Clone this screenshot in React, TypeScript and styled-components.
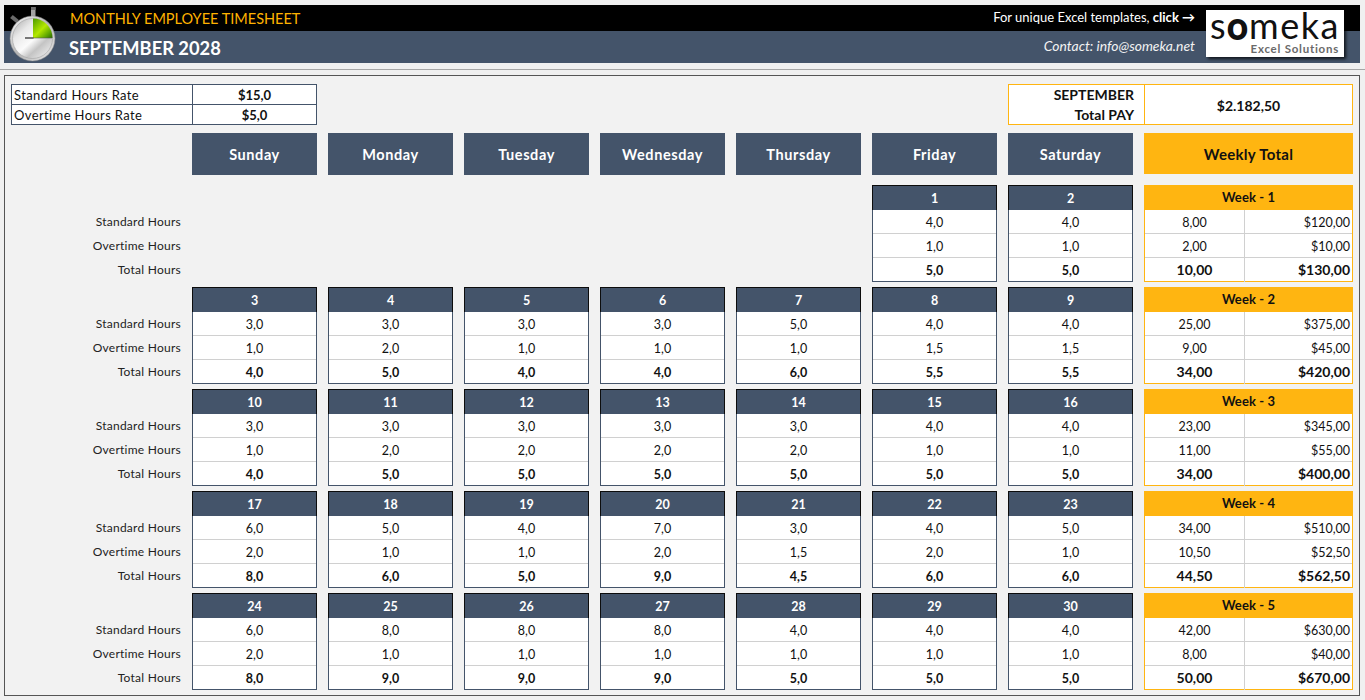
import React from "react";
import styled, { createGlobalStyle } from "styled-components";

const SLATE = "#44546a";
const AMBER = "#ffb511";
const INK = "#111111";
const FONT = `Lato, "Open Sans", "Liberation Sans", sans-serif`;

const GlobalStyle = createGlobalStyle`
  html, body {
    margin: 0;
    padding: 0;
    background: #f0f0f0;
    font-family: ${FONT};
    color: ${INK};
  }
`;

const Page = styled.div`
  width: 1365px;
  height: 700px;
  overflow: hidden;
  padding: 5px 5px 0 4px;
  box-sizing: border-box;
`;

const Banner = styled.header`
  position: relative;
  height: 58px;
`;

const BannerTop = styled.div`
  height: 26px;
  background: #000;
  display: flex;
  align-items: center;
  justify-content: space-between;
  padding: 0 165px 0 66px;
`;

const BannerBottom = styled.div`
  height: 32px;
  background: ${SLATE};
  display: flex;
  align-items: center;
  justify-content: space-between;
  padding: 2px 165px 0 65px;
  box-sizing: border-box;
`;

const Title = styled.div`
  color: #ffb300;
  font-size: 14.5px;
`;

const Month = styled.div`
  color: #fff;
  font-size: 18.3px;
  font-weight: 700;
`;

const Promo = styled.div`
  color: #fff;
  font-size: 13px;
  margin-bottom: 2px;
  b {
    font-weight: 700;
  }
`;

const Contact = styled.div`
  color: #f2f2f2;
  font-size: 13.9px;
  font-style: italic;
  margin-bottom: 6px;
`;

const Watch = styled.svg`
  position: absolute;
  left: -4px;
  top: -5px;
`;

const Logo = styled.div`
  position: absolute;
  left: 1202px;
  top: 5px;
  width: 138px;
  height: 47px;
  background: #fff;
  box-shadow: 2px 2px 3px rgba(0, 0, 0, 0.75);
  display: flex;
  flex-direction: column;
  align-items: center;
`;

const LogoWord = styled.div`
  font-size: 36px;
  line-height: 29px;
  height: 29px;
  margin-top: 1px;
  letter-spacing: 1.5px;
  color: #111;
  white-space: nowrap;
`;

const LogoO = styled.span`
  position: relative;
  display: inline-block;
  -webkit-text-stroke: 2px #111;
`;

const LogoBars = styled.svg`
  position: absolute;
  left: 6px;
  top: 13px;
`;

const LogoSub = styled.div`
  align-self: flex-end;
  margin: 2px 5px 0 0;
  font-size: 11.5px;
  line-height: 13px;
  font-weight: 700;
  letter-spacing: 0.75px;
  color: #6a6a6a;
`;

const Rule = styled.div`
  height: 1px;
  margin: 6px -5px 0 -4px;
  background: #a6a6a6;
`;

const Sheet = styled.main`
  margin-top: 5px;
  width: 1356px;
  height: 621px;
  box-sizing: border-box;
  border: 1px solid #555;
  background: #f2f2f2;
  padding: 8px 6px 0 6px;
`;

const Columns = styled.div<{ $top?: number }>`
  display: grid;
  grid-template-columns: 170px repeat(7, 125px) 209px;
  column-gap: 11px;
  margin-top: ${(p) => p.$top ?? 0}px;
`;

const RatesTable = styled.div`
  grid-column: 1 / 3;
  height: 41px;
  box-sizing: border-box;
  border: 1px solid ${SLATE};
  display: grid;
  grid-template-columns: 181px 1fr;
  grid-template-rows: 20px 19px;
  background: #fff;
`;

const RateName = styled.div<{ $last?: boolean }>`
  display: flex;
  align-items: center;
  padding-left: 2px;
  font-size: 13px;
  letter-spacing: 0.38px;
  border-right: 1px solid ${SLATE};
  border-bottom: ${(p) => (p.$last ? "none" : `1px solid ${SLATE}`)};
`;

const RateValue = styled.div<{ $last?: boolean }>`
  display: flex;
  align-items: center;
  justify-content: center;
  font-size: 13px;
  font-weight: 700;
  border-bottom: ${(p) => (p.$last ? "none" : `1px solid ${SLATE}`)};
`;

const TotalBox = styled.div`
  grid-column: 8 / 10;
  height: 41px;
  box-sizing: border-box;
  border: 1px solid ${AMBER};
  background: #fff;
  display: grid;
  grid-template-columns: 136px 1fr;
`;

const TotalLabel = styled.div`
  border-right: 1px solid ${AMBER};
  padding-right: 10px;
  text-align: right;
  font-size: 14px;
  line-height: 20px;
  font-weight: 700;
`;

const TotalValue = styled.div`
  display: flex;
  align-items: center;
  justify-content: center;
  font-size: 14px;
  font-weight: 700;
`;

const DayHead = styled.div`
  height: 42px;
  background: ${SLATE};
  color: #fff;
  display: flex;
  align-items: center;
  justify-content: center;
  font-size: 14.5px;
  font-weight: 700;
  letter-spacing: 0.58px;
`;

const WeekHead = styled.div`
  height: 41px;
  background: ${AMBER};
  display: flex;
  align-items: center;
  justify-content: center;
  font-size: 15px;
  font-weight: 700;
  letter-spacing: 0.3px;
`;

const Labels = styled.div`
  padding-top: 24px;
`;

const Label = styled.div`
  height: 24px;
  display: flex;
  align-items: center;
  justify-content: flex-end;
  font-size: 12px;
  letter-spacing: 0.25px;
  color: #222;
`;

const DayCard = styled.div`
  height: 97px;
  box-sizing: border-box;
`;

const DayNumber = styled.div`
  height: 25px;
  box-sizing: border-box;
  border: 1px solid #0c0c0c;
  border-bottom: none;
  background: ${SLATE};
  color: #fff;
  display: flex;
  align-items: center;
  justify-content: center;
  font-size: 12.5px;
  font-weight: 700;
`;

const DayBody = styled.div`
  height: 72px;
  box-sizing: border-box;
  border: 1px solid ${SLATE};
  border-top: none;
  background: #fff;
`;

const Value = styled.div<{ $bold?: boolean }>`
  height: 24px;
  box-sizing: border-box;
  display: flex;
  align-items: center;
  justify-content: center;
  font-size: 12.5px;
  font-weight: ${(p) => (p.$bold ? 700 : 400)};
  &:not(:last-child) {
    padding-top: 2px;
    border-bottom: 1px solid #d0d0d0;
  }
`;

const WeekCard = styled.div`
  height: 97px;
`;

const WeekTitle = styled.div`
  height: 25px;
  box-sizing: border-box;
  padding-bottom: 1px;
  background: ${AMBER};
  display: flex;
  align-items: center;
  justify-content: center;
  font-size: 13px;
  font-weight: 700;
  letter-spacing: 0.1px;
`;

const WeekBody = styled.div`
  height: 72px;
  box-sizing: border-box;
  border: 1px solid ${AMBER};
  border-top: none;
  background: #fff;
`;

const WeekRow = styled.div<{ $bold?: boolean }>`
  height: 24px;
  box-sizing: border-box;
  display: grid;
  grid-template-columns: 100px 1fr;
  font-size: ${(p) => (p.$bold ? 14 : 12.5)}px;
  font-weight: ${(p) => (p.$bold ? 700 : 400)};
  &:not(:last-child) {
    border-bottom: 1px solid #d0d0d0;
  }
`;

const WeekHours = styled.div<{ $bold?: boolean }>`
  display: flex;
  align-items: center;
  justify-content: center;
  box-sizing: border-box;
  border-right: 1px solid #d0d0d0;
  padding: ${(p) => (p.$bold ? "0 0 2px" : "2px 0 0")};
`;

const WeekPay = styled.div<{ $bold?: boolean }>`
  display: flex;
  align-items: center;
  justify-content: flex-end;
  padding: ${(p) => (p.$bold ? "0 2px 2px 0" : "2px 2px 0 0")};
`;

type Day = { n: number; std: string; ot: string; total: string };

const d = (n: number, std: string, ot: string, total: string): Day => ({ n, std, ot, total });

const dayNames = ["Sunday", "Monday", "Tuesday", "Wednesday", "Thursday", "Friday", "Saturday"];

const weeks: { days: (Day | null)[]; rows: [string, string][] }[] = [
  {
    days: [null, null, null, null, null, d(1, "4,0", "1,0", "5,0"), d(2, "4,0", "1,0", "5,0")],
    rows: [["8,00", "$120,00"], ["2,00", "$10,00"], ["10,00", "$130,00"]],
  },
  {
    days: [
      d(3, "3,0", "1,0", "4,0"), d(4, "3,0", "2,0", "5,0"), d(5, "3,0", "1,0", "4,0"), d(6, "3,0", "1,0", "4,0"),
      d(7, "5,0", "1,0", "6,0"), d(8, "4,0", "1,5", "5,5"), d(9, "4,0", "1,5", "5,5"),
    ],
    rows: [["25,00", "$375,00"], ["9,00", "$45,00"], ["34,00", "$420,00"]],
  },
  {
    days: [
      d(10, "3,0", "1,0", "4,0"), d(11, "3,0", "2,0", "5,0"), d(12, "3,0", "2,0", "5,0"), d(13, "3,0", "2,0", "5,0"),
      d(14, "3,0", "2,0", "5,0"), d(15, "4,0", "1,0", "5,0"), d(16, "4,0", "1,0", "5,0"),
    ],
    rows: [["23,00", "$345,00"], ["11,00", "$55,00"], ["34,00", "$400,00"]],
  },
  {
    days: [
      d(17, "6,0", "2,0", "8,0"), d(18, "5,0", "1,0", "6,0"), d(19, "4,0", "1,0", "5,0"), d(20, "7,0", "2,0", "9,0"),
      d(21, "3,0", "1,5", "4,5"), d(22, "4,0", "2,0", "6,0"), d(23, "5,0", "1,0", "6,0"),
    ],
    rows: [["34,00", "$510,00"], ["10,50", "$52,50"], ["44,50", "$562,50"]],
  },
  {
    days: [
      d(24, "6,0", "2,0", "8,0"), d(25, "8,0", "1,0", "9,0"), d(26, "8,0", "1,0", "9,0"), d(27, "8,0", "1,0", "9,0"),
      d(28, "4,0", "1,0", "5,0"), d(29, "4,0", "1,0", "5,0"), d(30, "4,0", "1,0", "5,0"),
    ],
    rows: [["42,00", "$630,00"], ["8,00", "$40,00"], ["50,00", "$670,00"]],
  },
];

const Stopwatch = () => (
  <Watch width="64" height="64" viewBox="0 0 64 64">
    <defs>
      <linearGradient id="rim" x1="0" y1="0" x2="1" y2="1">
        <stop offset="0" stopColor="#f8f8f8" />
        <stop offset="0.5" stopColor="#b4b4b4" />
        <stop offset="1" stopColor="#ececec" />
      </linearGradient>
      <linearGradient id="face" x1="0" y1="0" x2="0.9" y2="1">
        <stop offset="0" stopColor="#a6a6a6" />
        <stop offset="0.3" stopColor="#e8e8e8" />
        <stop offset="0.55" stopColor="#fbfbfb" />
        <stop offset="0.72" stopColor="#c4c4c4" />
        <stop offset="1" stopColor="#f2f2f2" />
      </linearGradient>
      <linearGradient id="green" x1="0" y1="0" x2="1" y2="1">
        <stop offset="0" stopColor="#4c9a00" />
        <stop offset="0.5" stopColor="#b4e800" />
        <stop offset="0.8" stopColor="#5aa300" />
        <stop offset="1" stopColor="#2a6400" />
      </linearGradient>
    </defs>
    <rect x="31" y="7" width="4.5" height="10" fill="#a2a2a2" />
    <rect x="31" y="7" width="4.5" height="3" fill="#6e6e6e" />
    <rect x="10.5" y="17" width="8" height="4" fill="#6a6a6a" transform="rotate(40 14.5 19)" />
    <circle cx="32.5" cy="38.5" r="22.5" fill="url(#rim)" stroke="#8a8a8a" strokeWidth="0.5" />
    <circle cx="32.5" cy="38.5" r="20" fill="url(#face)" stroke="#9a9a9a" strokeWidth="0.5" />
    <path d="M33 38 L33 18.5 A19.5 19.5 0 0 1 52.5 38 Z" fill="url(#green)" />
    <path d="M25 37.4 H33.5 V38.6 H25 Z" fill="#222" />
    <path d="M33 37.7 H52 V38.3 H33 Z" fill="#555" />
  </Watch>
);

const SomekaLogo = () => (
  <Logo>
    <LogoWord>
      s
      <LogoO>
        o
        <LogoBars width="9" height="8" viewBox="0 0 9 8">
          <rect x="1" y="5" width="1.5" height="3" fill="#fff" />
          <rect x="3.5" y="3" width="1.5" height="5" fill="#fff" />
          <rect x="6" y="1" width="1.5" height="7" fill="#fff" />
        </LogoBars>
      </LogoO>
      meka
    </LogoWord>
    <LogoSub>Excel Solutions</LogoSub>
  </Logo>
);

const App: React.FC = () => {
  return (
    <Page>
      <GlobalStyle />
      <Banner>
        <BannerTop>
          <Title>MONTHLY EMPLOYEE TIMESHEET</Title>
          <Promo>
            For unique Excel templates, <b>click →</b>
          </Promo>
        </BannerTop>
        <BannerBottom>
          <Month>SEPTEMBER 2028</Month>
          <Contact>Contact: info@someka.net</Contact>
        </BannerBottom>
        <Stopwatch />
        <SomekaLogo />
      </Banner>
      <Rule />
      <Sheet>
        <Columns>
          <RatesTable>
            <RateName>Standard Hours Rate</RateName>
            <RateValue>$15,0</RateValue>
            <RateName $last>Overtime Hours Rate</RateName>
            <RateValue $last>$5,0</RateValue>
          </RatesTable>
          <TotalBox>
            <TotalLabel>
              SEPTEMBER
              <br />
              Total PAY
            </TotalLabel>
            <TotalValue>$2.182,50</TotalValue>
          </TotalBox>
        </Columns>
        <Columns $top={8}>
          <div />
          {dayNames.map((name) => (
            <DayHead key={name}>{name}</DayHead>
          ))}
          <WeekHead>Weekly Total</WeekHead>
        </Columns>
        {weeks.map((week, i) => (
          <Columns key={i} $top={i === 0 ? 10 : 5}>
            <Labels>
              <Label>Standard Hours</Label>
              <Label>Overtime Hours</Label>
              <Label>Total Hours</Label>
            </Labels>
            {week.days.map((day, j) =>
              day ? (
                <DayCard key={j}>
                  <DayNumber>{day.n}</DayNumber>
                  <DayBody>
                    <Value>{day.std}</Value>
                    <Value>{day.ot}</Value>
                    <Value $bold>{day.total}</Value>
                  </DayBody>
                </DayCard>
              ) : (
                <div key={j} />
              )
            )}
            <WeekCard>
              <WeekTitle>Week - {i + 1}</WeekTitle>
              <WeekBody>
                {week.rows.map(([hours, pay], k) => (
                  <WeekRow key={k} $bold={k === 2}>
                    <WeekHours $bold={k === 2}>{hours}</WeekHours>
                    <WeekPay $bold={k === 2}>{pay}</WeekPay>
                  </WeekRow>
                ))}
              </WeekBody>
            </WeekCard>
          </Columns>
        ))}
      </Sheet>
    </Page>
  );
};

export default App;
